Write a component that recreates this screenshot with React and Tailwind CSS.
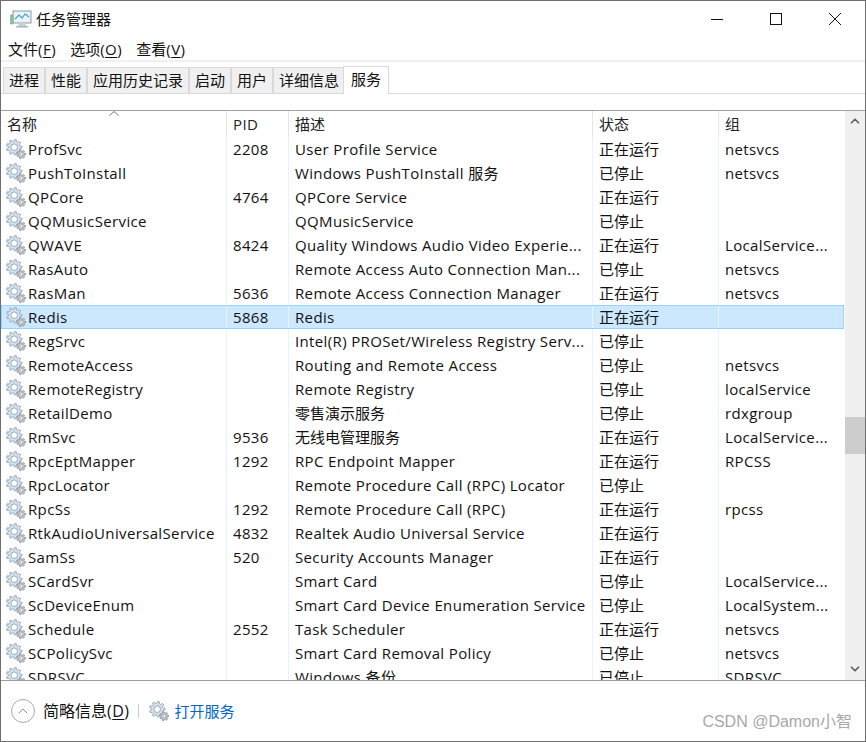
import { ChevronUp, ChevronDown } from "lucide-react";

const FONT = "font-['Open_Sans','Noto_Sans_CJK_SC',sans-serif]";

const tabs = ["进程", "性能", "应用历史记录", "启动", "用户", "详细信息"];

const services = [
  ["ProfSvc", "2208", "User Profile Service", "正在运行", "netsvcs"],
  ["PushToInstall", "", "Windows PushToInstall 服务", "已停止", "netsvcs"],
  ["QPCore", "4764", "QPCore Service", "正在运行", ""],
  ["QQMusicService", "", "QQMusicService", "已停止", ""],
  ["QWAVE", "8424", "Quality Windows Audio Video Experie...", "正在运行", "LocalService..."],
  ["RasAuto", "", "Remote Access Auto Connection Man...", "已停止", "netsvcs"],
  ["RasMan", "5636", "Remote Access Connection Manager", "正在运行", "netsvcs"],
  ["Redis", "5868", "Redis", "正在运行", ""],
  ["RegSrvc", "", "Intel(R) PROSet/Wireless Registry Serv...", "已停止", ""],
  ["RemoteAccess", "", "Routing and Remote Access", "已停止", "netsvcs"],
  ["RemoteRegistry", "", "Remote Registry", "已停止", "localService"],
  ["RetailDemo", "", "零售演示服务", "已停止", "rdxgroup"],
  ["RmSvc", "9536", "无线电管理服务", "正在运行", "LocalService..."],
  ["RpcEptMapper", "1292", "RPC Endpoint Mapper", "正在运行", "RPCSS"],
  ["RpcLocator", "", "Remote Procedure Call (RPC) Locator", "已停止", ""],
  ["RpcSs", "1292", "Remote Procedure Call (RPC)", "正在运行", "rpcss"],
  ["RtkAudioUniversalService", "4832", "Realtek Audio Universal Service", "正在运行", ""],
  ["SamSs", "520", "Security Accounts Manager", "正在运行", ""],
  ["SCardSvr", "", "Smart Card", "已停止", "LocalService..."],
  ["ScDeviceEnum", "", "Smart Card Device Enumeration Service", "已停止", "LocalSystem..."],
  ["Schedule", "2552", "Task Scheduler", "正在运行", "netsvcs"],
  ["SCPolicySvc", "", "Smart Card Removal Policy", "已停止", "netsvcs"],
  ["SDRSVC", "", "Windows 备份", "已停止", "SDRSVC"],
];

function gearPath(cx, cy, outer, inner, teeth) {
  const pts = [];
  const step = (Math.PI * 2) / teeth;
  for (let i = 0; i < teeth; i++) {
    const a = i * step;
    [
      [-0.3, inner],
      [-0.17, outer],
      [0.17, outer],
      [0.3, inner],
    ].forEach(([k, r]) => {
      const t = a + k * step;
      pts.push(`${(cx + Math.cos(t) * r).toFixed(2)} ${(cy + Math.sin(t) * r).toFixed(2)}`);
    });
  }
  return `M${pts.join("L")}Z`;
}

function GearIcon({ className }) {
  return (
    <svg viewBox="0 0 20 20" className={className}>
      <path d={gearPath(8.2, 8.2, 7.8, 5.9, 9)} fill="#d5e2ee" stroke="#8a9db0" strokeWidth="0.8" />
      <circle cx="8.2" cy="8.2" r="3.3" fill="#fff" stroke="#8ea2b6" strokeWidth="0.9" />
      <path d={gearPath(15.2, 15.2, 4.5, 3.2, 7)} fill="#c4c9cd" stroke="#7d8286" strokeWidth="0.7" />
      <circle cx="15.2" cy="15.2" r="1.4" fill="#fff" stroke="#888" strokeWidth="0.5" />
    </svg>
  );
}

function AppIcon() {
  return (
    <svg viewBox="0 0 22 20" className="h-5 w-[22px]">
      <rect x="3" y="2" width="18" height="12" fill="#eaf3f8" stroke="#8a9aa5" />
      <path d="M5 10l4-4 3 3 3-4 4 3" fill="none" stroke="#3f9fd0" strokeWidth="1.2" />
      <rect x="0.5" y="6" width="2.5" height="9" fill="#7ed07a" stroke="#8a9aa5" strokeWidth="0.5" />
      <path d="M9 14h6l1 3H8z" fill="#c9d0d5" />
      <rect x="6" y="17" width="12" height="1.5" fill="#aab3b9" />
    </svg>
  );
}

function Mnemonic({ label, k }) {
  return (
    <span>
      {label}
      <span className="tracking-[0.5px]">
        (<span className="underline underline-offset-2">{k}</span>)
      </span>
    </span>
  );
}

// latin text in the reference runs a little wider than the installed font, CJK doesn't
function cellText(text) {
  const hasLatin = /[A-Za-z0-9]/.test(text);
  return <span className={hasLatin ? "tracking-[0.36px]" : ""}>{text}</span>;
}

function Row({ svc }) {
  const [name, pid, desc, status, group] = svc;
  const selected = name === "Redis";
  return (
    <div
      className={`flex h-6 w-[843px] shrink-0 items-center whitespace-nowrap text-[15px] text-[#111] ${
        selected ? "bg-[#cce8ff] outline outline-1 -outline-offset-1 outline-[#99d1ff]" : ""
      }`}
    >
      <div className="flex h-full w-[226px] items-center border-r border-[#e9f3fd] pl-[5px]">
        <GearIcon className="mr-[2px] h-5 w-5 shrink-0" />
        {cellText(name)}
      </div>
      <div className="flex h-full w-[62px] items-center border-r border-[#e9f3fd] pl-[6px]">{cellText(pid)}</div>
      <div className="flex h-full w-[304px] items-center border-r border-[#e9f3fd] pl-[6px]">{cellText(desc)}</div>
      <div className="flex h-full w-[126px] items-center border-r border-[#e9f3fd] pl-[6px]">{status}</div>
      <div className="flex h-full w-[125px] items-center pl-[6px]">{cellText(group)}</div>
    </div>
  );
}

function HeaderCell({ className, children }) {
  return (
    <div className={`flex h-full items-center border-r border-[#e5e5e5] pl-[6px] ${className}`}>{children}</div>
  );
}

export default function App() {
  return (
    <div className={`flex h-[742px] w-[866px] flex-col overflow-hidden border border-[#6e6e6e] bg-white text-[#111] ${FONT}`}>
      {/* title bar */}
      <div className="flex h-[36px] shrink-0 items-center">
        <div className="ml-[9px] mr-[4px]">
          <AppIcon />
        </div>
        <span className="text-[15px]">任务管理器</span>
        <div className="ml-auto flex items-center">
          <svg viewBox="0 0 46 36" className="h-9 w-[46px]">
            <path d="M17 18.5h12" stroke="#111" strokeWidth="1" />
          </svg>
          <div className="w-[13px]" />
          <svg viewBox="0 0 46 36" className="h-9 w-[46px]">
            <rect x="17.5" y="12.5" width="11" height="11" fill="none" stroke="#111" />
          </svg>
          <div className="w-[13px]" />
          <svg viewBox="0 0 46 36" className="mr-[7px] h-9 w-[46px]">
            <path d="M17 12l12 12M29 12l-12 12" stroke="#111" strokeWidth="1" />
          </svg>
        </div>
      </div>

      {/* menu */}
      <div className="flex h-[25px] shrink-0 items-center gap-[14px] border-b-2 border-[#f0f0f0] pl-[7px] pt-[2px] text-[15px]">
        <Mnemonic label="文件" k="F" />
        <Mnemonic label="选项" k="O" />
        <Mnemonic label="查看" k="V" />
      </div>

      {/* tabs */}
      <div className="flex h-[32px] shrink-0 items-end border-b border-[#d9d9d9] pl-[2px] text-[15px]">
        {tabs.map((t) => (
          <div
            key={t}
            className="flex h-[26px] items-center border border-b-0 border-[#d9d9d9] bg-[#f0f0f0] px-[5px]"
          >
            {t}
          </div>
        ))}
        <div className="relative z-10 -mb-px -ml-[2px] flex h-[28px] items-center border border-b-0 border-[#d9d9d9] bg-white px-[7px] pb-[2px]">
          服务
        </div>
      </div>

      {/* empty toolbar strip */}
      <div className="h-[17px] shrink-0 border-b border-[#a0a0a0]" />

      {/* list + scrollbar */}
      <div className="flex min-h-0 flex-1">
        <div className="flex min-w-0 flex-1 flex-col overflow-hidden">
          <div className="relative flex h-[26px] w-[843px] shrink-0 items-center text-[15px] text-[#222]">
            <HeaderCell className="w-[226px]">名称</HeaderCell>
            <HeaderCell className="w-[62px]">{cellText("PID")}</HeaderCell>
            <HeaderCell className="w-[304px]">描述</HeaderCell>
            <HeaderCell className="w-[126px]">状态</HeaderCell>
            <HeaderCell className="w-[125px] border-r-0">组</HeaderCell>
            <svg viewBox="0 0 10 5" className="absolute left-[108px] top-0 h-[5px] w-[10px]">
              <path d="M0.5 4.5L5 0.5l4.5 4" fill="none" stroke="#777" />
            </svg>
          </div>
          <div className="flex min-h-0 flex-1 flex-col overflow-hidden">
            {services.map((s) => (
              <Row key={s.join("-")} svc={s} />
            ))}
          </div>
        </div>
        <div className="flex w-[20px] shrink-0 flex-col items-center bg-[#f0f0f0] text-[#606060]">
          <div className="flex h-5 items-center justify-center">
            <ChevronUp size={14} strokeWidth={3} />
          </div>
          <div className="mt-[286px] h-[37px] w-full bg-[#cdcdcd]" />
          <div className="mt-auto flex h-[22px] items-center justify-center">
            <ChevronDown size={14} strokeWidth={3} />
          </div>
        </div>
      </div>

      {/* footer */}
      <div className="relative flex h-[61px] shrink-0 items-center border-t border-[#a0a0a0] pl-[10px] text-[15px]">
        <div className="flex h-6 w-6 items-center justify-center rounded-full border border-[#a8a8a8] text-[#8a8a8a]">
          <ChevronUp size={16} strokeWidth={1.5} />
        </div>
        <span className="ml-2 text-[16px]">
          <Mnemonic label="简略信息" k="D" />
        </span>
        <div className="ml-[8px] mr-[10px] h-[14px] w-px bg-[#c8c8c8]" />
        <GearIcon className="mr-[6px] h-5 w-5" />
        <span className="text-[#0066cc]">打开服务</span>
        <span className="absolute bottom-[7px] right-[13px] font-['Liberation_Sans','Noto_Sans_CJK_SC',sans-serif] text-[16px] text-[#a8a8a8]">
          CSDN @Damon小智
        </span>
      </div>
    </div>
  );
}
